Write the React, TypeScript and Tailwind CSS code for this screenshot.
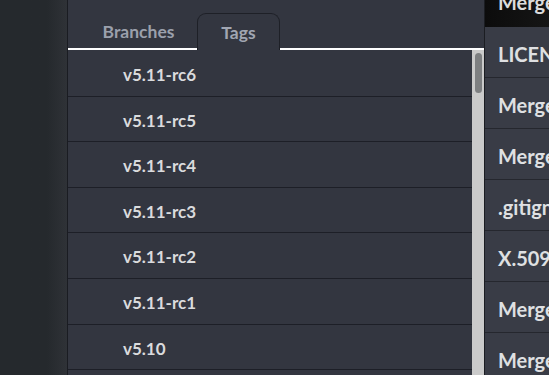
import React from 'react';

const tags = ['v5.11-rc6', 'v5.11-rc5', 'v5.11-rc4', 'v5.11-rc3', 'v5.11-rc2', 'v5.11-rc1', 'v5.10', 'v5.10-rc7'];

const commits = [
  "Merge tag 'drm-fixes-2021-01-29'",
  'LICENSES: add missing text',
  "Merge branch 'akpm' (patches from Andrew)",
  "Merge tag 'sound-5.11-rc6'",
  '.gitignore: ignore generated files',
  'X.509: fix crash caused by NULL pointer',
  "Merge tag 'net-5.11-rc6'",
  "Merge tag 'block-5.11-2021-01-29'",
];

export default function App() {
  return (
    <div className="flex h-[375px] w-[549px] overflow-hidden bg-[#333640] font-['Lato','Open_Sans',sans-serif]">
      {/* side strip */}
      <div className="w-[67px] flex-shrink-0 bg-gradient-to-r from-[#25292d] from-70% to-[#2f3237]" />
      <div className="w-px flex-shrink-0 bg-[#1a1c22]" />

      {/* tags panel */}
      <div className="flex w-[416px] flex-shrink-0 flex-col bg-[#333640]">
        <div className="flex h-[50px] items-end">
          <div className="h-full w-3 border-b-2 border-white" />
          <div className="flex h-[37px] w-[117px] items-center justify-center border-b-2 border-white pt-[3px] text-[17.5px] font-bold text-[#9ba0ac]">
            Branches
          </div>
          <div className="flex h-[37px] w-[83px] items-center justify-center rounded-t-[9px] border border-b-0 border-[#1e2027] pt-[2px] text-[17.5px] font-bold text-[#a1a6b2]">
            Tags
          </div>
          <div className="h-full flex-1 border-b-2 border-white" />
        </div>

        <div className="flex min-h-0 flex-1">
          <div className="flex-1 overflow-hidden pt-px">
            {tags.map((t) => (
              <div
                key={t}
                className="flex h-[45.6px] items-center border-b border-[#1d1f27] pl-[55px] pt-[3px] text-[17px] font-bold text-[#dadbdd]"
              >
                {t}
              </div>
            ))}
          </div>
          {/* scrollbar */}
          <div className="w-3 flex-shrink-0 bg-[#cacaca] pl-[3px] pt-[3px]">
            <div className="h-[40px] w-[7px] rounded-full bg-[#7d7f81]" />
          </div>
        </div>
      </div>

      <div className="w-px flex-shrink-0 bg-[#1b1d22]" />

      {/* commit list */}
      <div className="min-w-0 flex-1 overflow-hidden bg-[#393c46]">
        <div className="-mt-[24px]">
          {commits.map((c, i) => (
            <div
              key={c}
              className={
                i === 0
                  ? 'flex h-[51px] items-center whitespace-nowrap bg-gradient-to-r from-[#0c0c0c] to-[#151515] pl-[13px] text-[20px] font-bold text-[#dcdcdc]'
                  : 'flex h-[51px] items-center whitespace-nowrap border-b border-[#25272e] bg-[#393c46] pl-[13px] pt-[4px] text-[20px] font-bold text-[#dfe0e2]'
              }
            >
              {c}
            </div>
          ))}
        </div>
      </div>
    </div>
  );
}
